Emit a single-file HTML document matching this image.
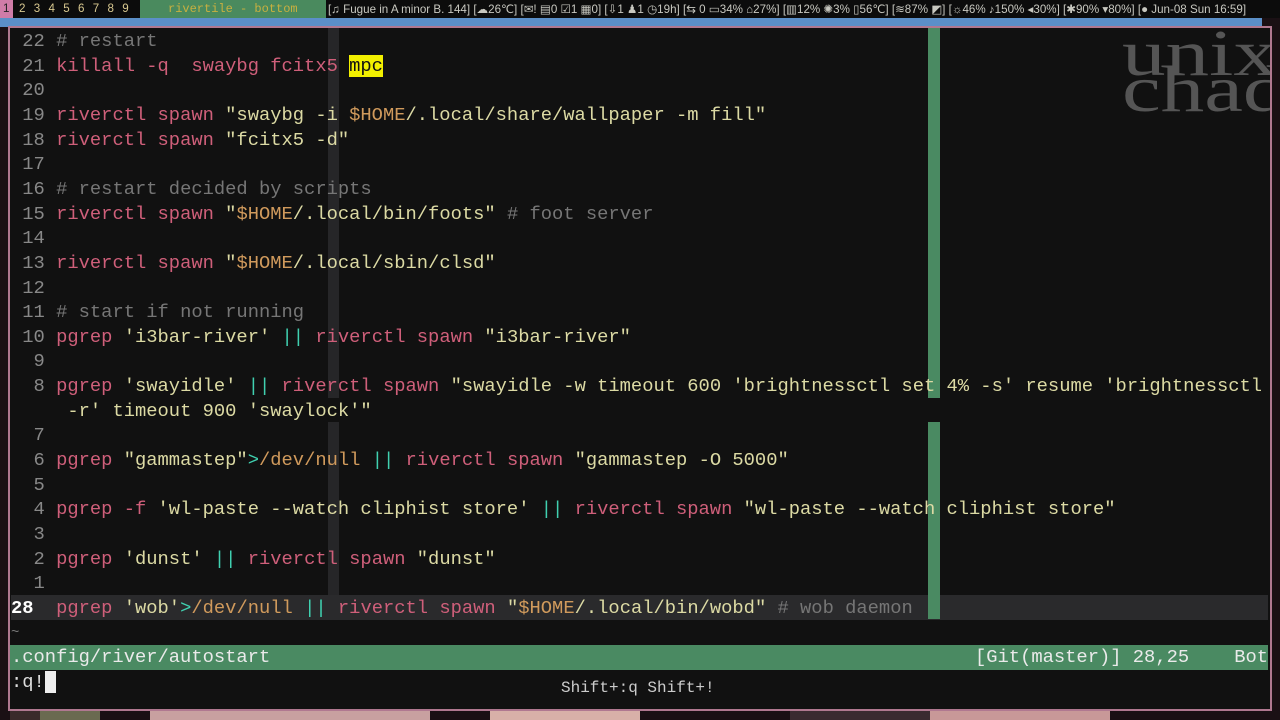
<!DOCTYPE html>
<html><head><meta charset="utf-8"><style>
*{margin:0;padding:0;box-sizing:border-box}
body{width:1280px;height:720px;overflow:hidden;background:#1a1014;position:relative;font-family:"Liberation Mono",monospace}
#bar{position:absolute;left:0;top:0;width:1280px;height:18px;background:#0c0c0c;font-family:"Liberation Sans","DejaVu Sans",sans-serif;font-size:11.6px;color:#c8c8c0;white-space:nowrap}
#bar span{position:absolute;top:2px}
#blue{position:absolute;left:0;top:18px;width:1262px;height:9px;background:#5b8fc8}
#win{position:absolute;left:8px;top:26px;width:1264px;height:685px;background:#111;border:2px solid #b07890;overflow:hidden}
.r{position:absolute;left:11px;height:24.65px;line-height:24.65px;font-size:18.8px;white-space:pre;color:#dcdaa4;top:1px}
.n{color:#888}.k{color:#cf5f7a}.c{color:#767676}.t{color:#40d0b0}.o{color:#d09a5c}
.hl{background:#f2f000;color:#111}
#photo div{position:absolute;top:711px;height:9px}
</style></head><body>
<div id="bar">
<span style="left:0;top:0;width:13px;height:18px;background:#d07ca8;color:#222;padding:2px 0 0 3px">1</span>
<span style="left:19px;color:#d8c890;letter-spacing:8.3px">23456789</span>
<span style="left:140px;top:0;width:186px;height:18px;background:#4a8a5e;color:#c8b040;padding:2px 0 0 28px;font-family:'Liberation Mono',monospace;font-size:12px">rivertile - bottom</span>
<span style="left:328px">[♫ Fugue in A minor B. 144] [☁26℃] [✉! ▤0 ☑1 ▦0] [⇩1 ♟1 ◷19h] [⇆ 0 ▭34% ⌂27%] [▥12% ✺3% ▯56℃] [≋87% ◩] [☼46% ♪150% ◂30%] [✱90% ▾80%] [● Jun-08 Sun 16:59]</span>
</div>
<div id="blue"></div>
<div id="win"><div style="position:absolute;left:1112px;top:0px;font-family:'Liberation Serif',serif;font-size:66px;line-height:36px;color:#555;padding-top:8px;transform:scaleX(1.32);transform-origin:left top">unix<br>chad</div></div>
<div style="position:absolute;left:928px;top:28px;width:12px;height:370px;background:#4a8a62"></div>
<div style="position:absolute;left:928px;top:422px;width:12px;height:197px;background:#4a8a62"></div>
<div style="position:absolute;left:328px;top:28px;width:11px;height:370px;background:#262628"></div>
<div style="position:absolute;left:328px;top:422px;width:11px;height:173px;background:#262628"></div>
<div style="position:absolute;left:11px;top:595px;width:1257px;height:24.6px;background:#2a2a2c"></div>
<div style="position:absolute;left:928px;top:595px;width:12px;height:24px;background:#4a8a62"></div>
<div style="position:absolute;left:10px;top:645px;width:1258px;height:24.6px;background:#4a8a62"></div>

<div style="position:absolute;left:0;top:1px;width:1280px;height:700px">
<div class="r" style="top:28px"><span class="n"> 22 </span><span class="c"># restart</span></div>
<div class="r" style="top:52.6px"><span class="n"> 21 </span><span class="k">killall -q  swaybg fcitx5 </span><span class="hl">mpc</span></div>
<div class="r" style="top:77.3px"><span class="n"> 20 </span></div>
<div class="r" style="top:102px"><span class="n"> 19 </span><span class="k">riverctl spawn </span>"swaybg -i <span class="o">$HOME</span>/.local/share/wallpaper -m fill"</div>
<div class="r" style="top:126.6px"><span class="n"> 18 </span><span class="k">riverctl spawn </span>"fcitx5 -d"</div>
<div class="r" style="top:151.2px"><span class="n"> 17 </span></div>
<div class="r" style="top:175.9px"><span class="n"> 16 </span><span class="c"># restart decided by scripts</span></div>
<div class="r" style="top:200.5px"><span class="n"> 15 </span><span class="k">riverctl spawn </span>"<span class="o">$HOME</span>/.local/bin/foots" <span class="c"># foot server</span></div>
<div class="r" style="top:225.2px"><span class="n"> 14 </span></div>
<div class="r" style="top:249.8px"><span class="n"> 13 </span><span class="k">riverctl spawn </span>"<span class="o">$HOME</span>/.local/sbin/clsd"</div>
<div class="r" style="top:274.5px"><span class="n"> 12 </span></div>
<div class="r" style="top:299.1px"><span class="n"> 11 </span><span class="c"># start if not running</span></div>
<div class="r" style="top:323.8px"><span class="n"> 10 </span><span class="k">pgrep </span>'i3bar-river' <span class="t">||</span> <span class="k">riverctl spawn </span>"i3bar-river"</div>
<div class="r" style="top:348.4px"><span class="n">  9 </span></div>
<div class="r" style="top:373px"><span class="n">  8 </span><span class="k">pgrep </span>'swayidle' <span class="t">||</span> <span class="k">riverctl spawn </span>"swayidle -w timeout 600 'brightnessctl set 4% -s' resume 'brightnessctl</div>
<div class="r" style="top:397.7px"><span class="n">    </span> -r' timeout 900 'swaylock'"</div>
<div class="r" style="top:422.3px"><span class="n">  7 </span></div>
<div class="r" style="top:447px"><span class="n">  6 </span><span class="k">pgrep </span>"gammastep"<span class="t">&gt;</span><span class="o">/dev/null</span> <span class="t">||</span> <span class="k">riverctl spawn </span>"gammastep -O 5000"</div>
<div class="r" style="top:471.6px"><span class="n">  5 </span></div>
<div class="r" style="top:496.3px"><span class="n">  4 </span><span class="k">pgrep -f </span>'wl-paste --watch cliphist store' <span class="t">||</span> <span class="k">riverctl spawn </span>"wl-paste --watch cliphist store"</div>
<div class="r" style="top:520.9px"><span class="n">  3 </span></div>
<div class="r" style="top:545.5px"><span class="n">  2 </span><span class="k">pgrep </span>'dunst' <span class="t">||</span> <span class="k">riverctl spawn </span>"dunst"</div>
<div class="r" style="top:570.2px"><span class="n">  1 </span></div>
<div class="r" style="top:594.8px"><span style="color:#fff;font-weight:bold">28  </span><span class="k">pgrep </span>'wob'<span class="t">&gt;</span><span class="o">/dev/null</span> <span class="t">||</span> <span class="k">riverctl spawn </span>"<span class="o">$HOME</span>/.local/bin/wobd" <span class="c"># wob daemon</span></div>
<div class="r" style="top:619.5px;color:#777;font-size:14px">~</div>
<div class="r" style="top:644.1px;color:#eaeaea">.config/river/autostart</div>
<div class="r" style="top:644.1px;left:975px;color:#eaeaea">[Git(master)] 28,25    Bot</div>
<div class="r" style="top:668.8px;color:#ddd">:q!<span style="background:#eee">&nbsp;</span></div>
<div class="r" style="top:674px;left:561px;color:#ccc;font-size:16px;line-height:26px">Shift+:q Shift+!</div>
</div>
<div id="photo">
<div style="left:10px;width:30px;background:#3a2a2a"></div>
<div style="left:40px;width:60px;background:#6a6a50"></div>
<div style="left:150px;width:280px;background:#c8a0a0"></div>
<div style="left:490px;width:150px;background:#d8b0a8"></div>
<div style="left:790px;width:140px;background:#3a2a30"></div>
<div style="left:930px;width:180px;background:#c89898"></div>
</div>
</body></html>
